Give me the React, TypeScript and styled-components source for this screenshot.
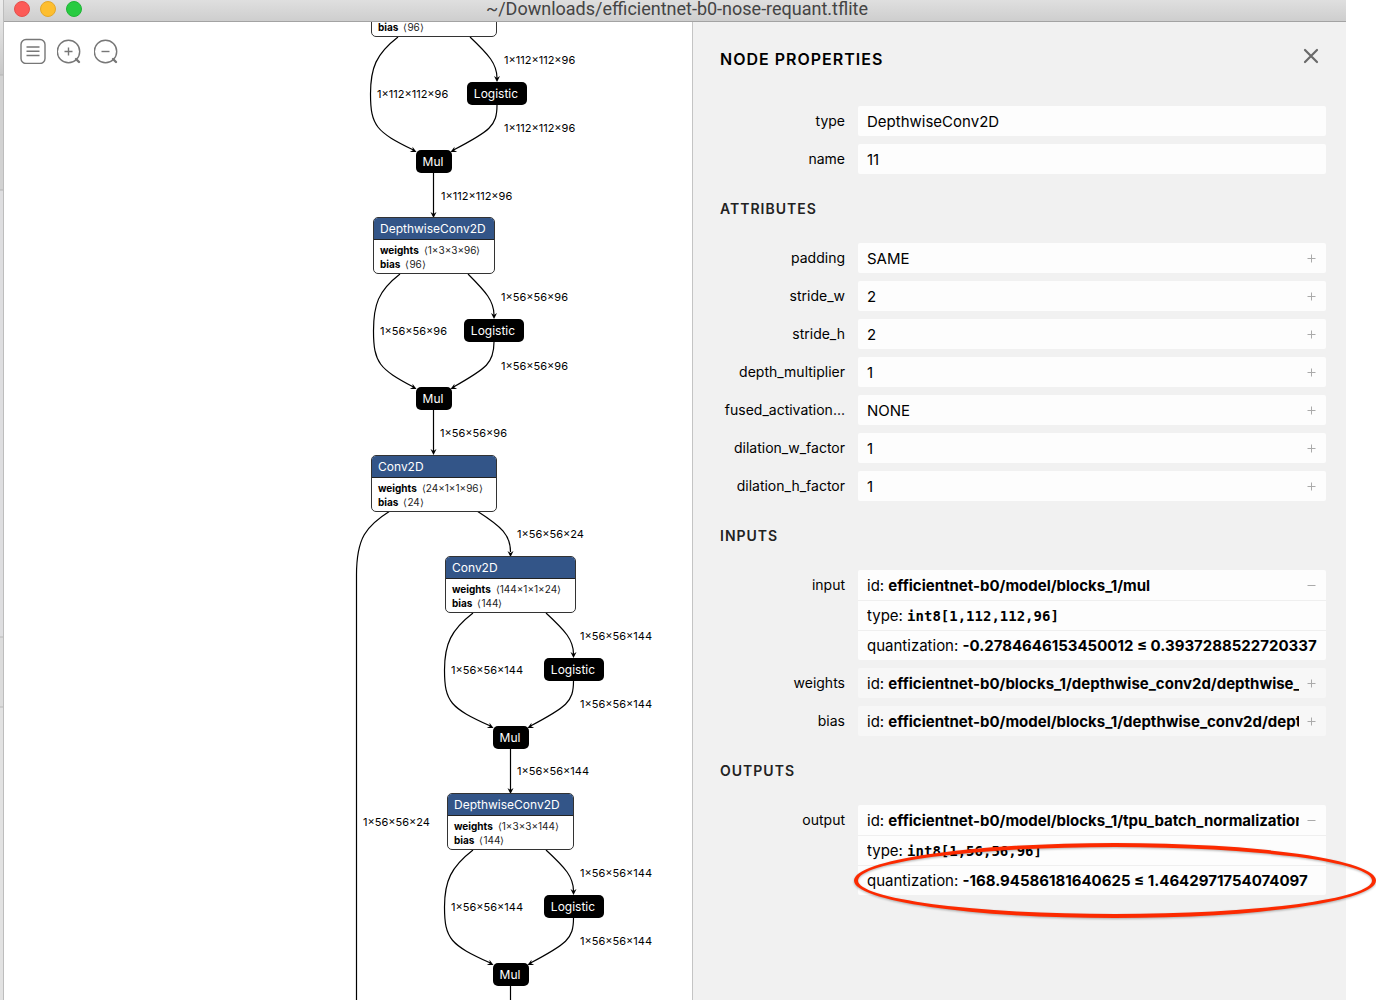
import React from "react";
import styled, { createGlobalStyle } from "styled-components";

const GlobalStyle = createGlobalStyle`
  * { box-sizing: border-box; }
  body {
    margin: 0;
    background: #fff;
    color: #000;
    font-family: Inter, "Liberation Sans", sans-serif;
    overflow: hidden;
  }
`;

/* ---------- window ---------- */

const Desktop = styled.div`
  display: grid;
  grid-template-columns: 4px minmax(0, 1fr) 30px;
  height: 100vh;
`;

const Backdrop = styled.div`
  border-right: 1px solid #bdbdbd;
  background: linear-gradient(
    #ececec 0,
    #e0e0e0 30px,
    #c8c8c8 74px,
    #b4b4b4 75px,
    #d2d2d2 76px,
    #d2d2d2 189px,
    #b4b4b4 190px,
    #dedee0 191px,
    #dedee0 636px,
    #b8b8b8 637px,
    #dcdcdc 638px,
    #dcdcdc 706px,
    #b8b8b8 707px,
    #e2e2e2 708px
  );
`;

const Window = styled.main`
  display: flex;
  flex-direction: column;
  min-height: 0;
`;

const TitleBar = styled.header`
  display: grid;
  grid-template-columns: 1fr auto 1fr;
  align-items: center;
  height: 22px;
  flex: none;
  padding: 0 6px 4px 10px;
  background: linear-gradient(#dfdfdf, #cecece);
  border-bottom: 1px solid #a3a3a3;
`;

const Lights = styled.div`
  display: flex;
  gap: 10px;
`;

const Light = styled.button<{ $color: string; $rim: string }>`
  width: 16px;
  height: 16px;
  padding: 0;
  border: 1px solid ${(p) => p.$rim};
  border-radius: 50%;
  background: ${(p) => p.$color};
`;

const Title = styled.h1`
  margin: 0;
  font: 400 18px/16px Roboto, "Liberation Sans", sans-serif;
  color: #444;
`;

const Body = styled.div`
  display: grid;
  grid-template-columns: minmax(0, 1fr) 654px;
  flex: 1;
  min-height: 0;
`;

/* ---------- graph ---------- */

const Canvas = styled.section`
  position: relative;
  overflow: hidden;
  background: #fff;
`;

const Toolbar = styled.nav`
  position: absolute;
  top: 16px;
  left: 16px;
  display: flex;
  gap: 11px;
`;

const ToolButton = styled.button`
  width: 26px;
  height: 26px;
  padding: 0;
  border: 0;
  background: none;
  svg {
    display: block;
    fill: none;
    stroke: #777;
    stroke-width: 1.4;
  }
`;

const Pan = styled.div`
  position: absolute;
  top: -22px;
  left: -4px;
  width: 100%;
  height: 100%;
`;

const Edges = styled.svg`
  position: absolute;
  inset: 0;
  overflow: visible;
  fill: none;
  stroke: #000;
  stroke-width: 1.2;
`;

type Spot = { $x: number; $y: number };

const EdgeLabel = styled.span<Spot>`
  position: absolute;
  left: ${(p) => p.$x}px;
  top: ${(p) => p.$y - 7}px;
  font-size: 11px;
  line-height: 14px;
  white-space: nowrap;
`;

const Activation = styled.div<Spot & { $w: number }>`
  position: absolute;
  left: ${(p) => p.$x}px;
  top: ${(p) => p.$y}px;
  width: ${(p) => p.$w}px;
  height: 23px;
  padding-right: 2px;
  border-radius: 5px;
  background: #000;
  color: #fff;
  font-size: 12px;
  line-height: 23px;
  text-align: center;
`;

const Layer = styled.article<Spot & { $w: number }>`
  position: absolute;
  left: ${(p) => p.$x}px;
  top: ${(p) => p.$y}px;
  width: ${(p) => p.$w}px;
  border: 1px solid #333;
  border-radius: 5px;
  background: #fff;
  overflow: hidden;
`;

const LayerName = styled.h2`
  margin: 0;
  height: 22px;
  padding-left: 6px;
  border-bottom: 1px solid #222;
  background: #335588;
  color: #fff;
  font-size: 12px;
  font-weight: 400;
  line-height: 22px;
`;

const Weights = styled.ul`
  margin: 0;
  padding: 3px 0 2px 6px;
  list-style: none;
  font-size: 10px;
  line-height: 14px;
  white-space: nowrap;
  color: #222;
`;

const Weight = styled.li`
  display: flex;
  gap: 5px;
  b {
    color: #000;
  }
`;

/* ---------- sidebar ---------- */

const Sidebar = styled.aside`
  padding: 26px 20px 0 27px;
  border-left: 1px solid #c4c4c4;
  background: #f1f1f1;
`;

const SidebarHead = styled.div`
  display: flex;
  align-items: flex-start;
  justify-content: space-between;
  height: 58px;
`;

const SidebarTitle = styled.h2`
  margin: 0;
  font-size: 16px;
  font-weight: 600;
  line-height: 22px;
  letter-spacing: 1px;
`;

const CloseButton = styled.button`
  width: 30px;
  height: 16px;
  padding: 0;
  border: 0;
  background: none;
  svg {
    display: block;
    margin: auto;
    stroke: #6a6a6a;
    stroke-width: 2.2;
    stroke-linecap: round;
  }
`;

const SectionTitle = styled.h3`
  margin: 0;
  padding: 24px 0;
  color: #222;
  font-size: 14px;
  font-weight: 600;
  line-height: 21px;
  letter-spacing: 1px;
`;

const Rows = styled.div`
  display: grid;
  gap: 8px;
`;

const Row = styled.div`
  display: grid;
  grid-template-columns: 125px minmax(0, 1fr);
  column-gap: 13px;
  font-size: 15px;
  line-height: 29px;
`;

const nameStyle = `
  height: 30px;
  font-size: 14px;
  line-height: 30px;
  text-align: right;
  white-space: nowrap;
`;

const FieldLabel = styled.label`
  ${nameStyle}
`;

const ArgumentName = styled.span`
  ${nameStyle}
`;

const Box = styled.div<{ $dim?: boolean }>`
  position: relative;
  border-radius: 2px;
  background: ${(p) => (p.$dim ? "#f7f7f7" : "#fdfdfd")};
`;

const Line = styled.div`
  display: flex;
  height: 30px;
  padding: 1px 9px 0;
  & + & {
    padding-top: 0;
    border-top: 1px solid #efefef;
  }
`;

const Value = styled.input`
  flex: 1;
  min-width: 0;
  padding: 0;
  border: 0;
  outline: 0;
  background: none;
  color: inherit;
  font: inherit;
`;

const LineText = styled.div`
  flex: 1;
  min-width: 0;
  overflow: hidden;
  white-space: nowrap;
  b {
    font-weight: 700;
  }
  code {
    font: 700 14px/28px "DejaVu Sans Mono", monospace;
  }
`;

const Expander = styled.button`
  flex: none;
  width: 18px;
  padding: 0 0 0 8px;
  border: 0;
  background: none;
  svg {
    display: block;
    margin-bottom: 1px;
    stroke: #aaa;
    stroke-width: 1;
  }
`;

const Highlight = styled.div`
  position: absolute;
  left: -4px;
  right: -50px;
  bottom: -23px;
  height: 75px;
  border: 4px solid #fc2a00;
  border-radius: 50%;
  filter: drop-shadow(0 1px 1px rgba(0, 0, 0, 0.3));
  pointer-events: none;
`;

/* ---------- data ---------- */

const head = (x: number, y: number, dx: number, dy: number) => {
  const l = Math.hypot(dx, dy);
  const ux = dx / l;
  const uy = dy / l;
  const at = (b: number, s: number) =>
    `${x - ux * b - uy * s} ${y - uy * b + ux * s}`;
  return `M${x} ${y} L${at(6, 3)} L${at(4, 0)} L${at(6, -3)} Z`;
};

/* The swish pair: one branch goes straight to Mul, the other through Logistic. */
const swish = (y: number, ls: number, lx: number, rs: number, gx: number, mx: number) => ({
  lines: [
    `M${ls} ${y} C${ls - 22} ${y + 17} ${lx} ${y + 31} ${lx} ${y + 57} C${lx} ${y + 89} ${lx + 6} ${y + 95} ${mx - 20} ${y + 113}`,
    `M${rs} ${y} C${gx - 8} ${y + 18} ${gx} ${y + 27} ${gx} ${y + 41}`,
    `M${gx} ${y + 68} C${gx} ${y + 89} ${gx - 7} ${y + 94} ${mx + 20} ${y + 113}`,
  ],
  heads: [
    head(mx - 17, y + 115, 2, 1),
    head(gx, y + 45, 0, 1),
    head(mx + 17, y + 115, -2, 1),
  ],
});

const pairs = [
  swish(37, 398, 370.5, 470, 497, 433.5),
  swish(274, 400, 373.5, 468, 494, 433.5),
  swish(613, 473, 444.5, 546, 573.5, 510.5),
  swish(850, 473, 444.5, 546, 573.5, 510.5),
];

const lines = [
  ...pairs.flatMap((p) => p.lines),
  "M433.5 173 V214",
  "M433.5 410 V451",
  "M510.5 749 V790",
  "M510.5 986 V1030",
  "M390 511 C366 526 356.5 538 356.5 575 V1030",
  "M477 511 C502 527 510.5 535 510.5 552",
];

const heads = [
  ...pairs.flatMap((p) => p.heads),
  head(433.5, 218, 0, 1),
  head(433.5, 455, 0, 1),
  head(510.5, 794, 0, 1),
  head(510.5, 557, 0, 1),
];

type LayerData = { x: number; y: number; w: number; name?: string; weights?: string; bias: string };

const layers: LayerData[] = [
  { x: 371, y: 16, w: 126, bias: "96" },
  { x: 373, y: 217, w: 122, name: "DepthwiseConv2D", weights: "1×3×3×96", bias: "96" },
  { x: 371, y: 455, w: 126, name: "Conv2D", weights: "24×1×1×96", bias: "24" },
  { x: 445, y: 556, w: 131, name: "Conv2D", weights: "144×1×1×24", bias: "144" },
  { x: 447, y: 793, w: 127, name: "DepthwiseConv2D", weights: "1×3×3×144", bias: "144" },
];

const activations: [number, number, string][] = [
  [467, 82, "Logistic"],
  [416, 150, "Mul"],
  [464, 319, "Logistic"],
  [416, 387, "Mul"],
  [544, 658, "Logistic"],
  [493, 726, "Mul"],
  [544, 895, "Logistic"],
  [493, 963, "Mul"],
];

const edgeLabels: [number, number, string][] = [
  [504, 60, "1×112×112×96"],
  [377, 94, "1×112×112×96"],
  [504, 128, "1×112×112×96"],
  [441, 196, "1×112×112×96"],
  [501, 297, "1×56×56×96"],
  [380, 331, "1×56×56×96"],
  [501, 366, "1×56×56×96"],
  [440, 433, "1×56×56×96"],
  [517, 534, "1×56×56×24"],
  [580, 636, "1×56×56×144"],
  [451, 670, "1×56×56×144"],
  [580, 704, "1×56×56×144"],
  [517, 771, "1×56×56×144"],
  [363, 822, "1×56×56×24"],
  [580, 873, "1×56×56×144"],
  [451, 907, "1×56×56×144"],
  [580, 941, "1×56×56×144"],
];

const attributes = [
  ["padding", "SAME"],
  ["stride_w", "2"],
  ["stride_h", "2"],
  ["depth_multiplier", "1"],
  ["fused_activation...", "NONE"],
  ["dilation_w_factor", "1"],
  ["dilation_h_factor", "1"],
];

/* ---------- components ---------- */

function Sign({ open }: { open?: boolean }) {
  return (
    <Expander aria-label={open ? "Collapse" : "Expand"} aria-expanded={!!open}>
      <svg width="9" height="9" viewBox="0 0 9 9">
        <path d={open ? "M.5 4.5H8.5" : "M.5 4.5H8.5M4.5 .5V8.5"} />
      </svg>
    </Expander>
  );
}

function Field({ name, value, expandable }: { name: string; value: string; expandable?: boolean }) {
  const id = `field-${name.replace(/\W/g, "")}`;
  return (
    <Row>
      <FieldLabel htmlFor={id}>{name}</FieldLabel>
      <Box>
        <Line>
          <Value id={id} readOnly value={value} />
          {expandable && <Sign />}
        </Line>
      </Box>
    </Row>
  );
}

type ArgumentProps = {
  name: string;
  id: string;
  type?: string;
  quantization?: string;
  highlight?: boolean;
};

function Argument({ name, id, type, quantization, highlight }: ArgumentProps) {
  return (
    <Row>
      <ArgumentName>{name}</ArgumentName>
      <Box $dim={!type}>
        <Line>
          <LineText>
            id: <b>{id}</b>
          </LineText>
          <Sign open={!!type} />
        </Line>
        {type && (
          <Line>
            <LineText>
              type: <code>{type}</code>
            </LineText>
          </Line>
        )}
        {quantization && (
          <Line>
            <LineText>
              quantization: <b>{quantization}</b>
            </LineText>
          </Line>
        )}
        {highlight && <Highlight />}
      </Box>
    </Row>
  );
}

function Graph() {
  return (
    <Canvas>
      <Pan>
        <Edges width="100%" height="100%">
          {lines.map((d) => (
            <path key={d} d={d} />
          ))}
          {heads.map((d) => (
            <path key={d} d={d} fill="#000" stroke="none" />
          ))}
        </Edges>
        {layers.map((l) => (
          <Layer key={l.y} $x={l.x} $y={l.y} $w={l.w}>
            {l.name && <LayerName>{l.name}</LayerName>}
            <Weights>
              {l.weights && (
                <Weight>
                  <b>weights</b>
                  <span>{`⟨${l.weights}⟩`}</span>
                </Weight>
              )}
              <Weight>
                <b>bias</b>
                <span>{`⟨${l.bias}⟩`}</span>
              </Weight>
            </Weights>
          </Layer>
        ))}
        {activations.map(([x, y, name]) => (
          <Activation key={y} $x={x} $y={y} $w={name === "Mul" ? 36 : 60}>
            {name}
          </Activation>
        ))}
        {edgeLabels.map(([x, y, text]) => (
          <EdgeLabel key={y} $x={x} $y={y}>
            {text}
          </EdgeLabel>
        ))}
      </Pan>
      <Toolbar>
        <ToolButton aria-label="Model properties">
          <svg width="26" height="26" viewBox="0 0 26 26">
            <rect x="1" y="1.5" width="24" height="24" rx="5" />
            <path d="M6.5 9H19.5M6.5 13.3H19.5M6.5 17.5H19.5" />
          </svg>
        </ToolButton>
        <ToolButton aria-label="Zoom in">
          <svg width="26" height="26" viewBox="0 0 26 26">
            <circle cx="11.5" cy="13.5" r="11.2" />
            <path d="M7.5 13.5H15.5M11.5 9.5V17.5" />
            <path d="M19 21L22 24" strokeWidth="2.4" strokeLinecap="round" />
          </svg>
        </ToolButton>
        <ToolButton aria-label="Zoom out">
          <svg width="26" height="26" viewBox="0 0 26 26">
            <circle cx="11.5" cy="13.5" r="11.2" />
            <path d="M7.5 13.5H15.5" />
            <path d="M19 21L22 24" strokeWidth="2.4" strokeLinecap="round" />
          </svg>
        </ToolButton>
      </Toolbar>
    </Canvas>
  );
}

function Properties() {
  return (
    <Sidebar>
      <SidebarHead>
        <SidebarTitle>NODE PROPERTIES</SidebarTitle>
        <CloseButton aria-label="Close">
          <svg width="16" height="16" viewBox="0 0 16 16">
            <path d="M2 2L14 14M14 2L2 14" />
          </svg>
        </CloseButton>
      </SidebarHead>
      <Rows>
        <Field name="type" value="DepthwiseConv2D" />
        <Field name="name" value="11" />
      </Rows>
      <SectionTitle>ATTRIBUTES</SectionTitle>
      <Rows>
        {attributes.map(([name, value]) => (
          <Field key={name} name={name} value={value} expandable />
        ))}
      </Rows>
      <SectionTitle>INPUTS</SectionTitle>
      <Rows>
        <Argument
          name="input"
          id="efficientnet-b0/model/blocks_1/mul"
          type="int8[1,112,112,96]"
          quantization="-0.2784646153450012 ≤ 0.3937288522720337"
        />
        <Argument name="weights" id="efficientnet-b0/blocks_1/depthwise_conv2d/depthwise_" />
        <Argument name="bias" id="efficientnet-b0/model/blocks_1/depthwise_conv2d/dept" />
      </Rows>
      <SectionTitle>OUTPUTS</SectionTitle>
      <Rows>
        <Argument
          name="output"
          id="efficientnet-b0/model/blocks_1/tpu_batch_normalization"
          type="int8[1,56,56,96]"
          quantization="-168.94586181640625 ≤ 1.4642971754074097"
          highlight
        />
      </Rows>
    </Sidebar>
  );
}

export default function App() {
  return (
    <>
      <GlobalStyle />
      <Desktop>
        <Backdrop />
        <Window>
          <TitleBar>
            <Lights>
              <Light aria-label="Close window" $color="#fc5b57" $rim="#e5504c" />
              <Light aria-label="Minimize window" $color="#fdbe2f" $rim="#e3a72a" />
              <Light aria-label="Zoom window" $color="#28cb41" $rim="#20b436" />
            </Lights>
            <Title>~/Downloads/efficientnet-b0-nose-requant.tflite</Title>
          </TitleBar>
          <Body>
            <Graph />
            <Properties />
          </Body>
        </Window>
      </Desktop>
    </>
  );
}
